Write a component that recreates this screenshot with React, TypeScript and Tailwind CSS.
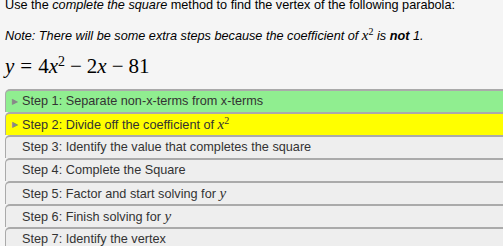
const M = ({ children }: { children: React.ReactNode }) => (
    <span className="font-['Liberation_Serif',serif] italic text-[15px]">{children}</span>
)

const Sup = ({ children }: { children: React.ReactNode }) => (
    <sup className="font-['Liberation_Serif',serif] not-italic text-[10px]">{children}</sup>
)

const steps: { label: React.ReactNode; bg: string; open?: boolean }[] = [
    { label: 'Step 1: Separate non-x-terms from x-terms', bg: 'bg-[#90ee90]', open: true },
    { label: <>Step 2: Divide off the coefficient of <M>x</M><Sup>2</Sup></>, bg: 'bg-[#ffff00]', open: true },
    { label: 'Step 3: Identify the value that completes the square', bg: 'bg-[#eeeeee]' },
    { label: 'Step 4: Complete the Square', bg: 'bg-[#eeeeee]' },
    { label: <>Step 5: Factor and start solving for <M>y</M></>, bg: 'bg-[#eeeeee]' },
    { label: <>Step 6: Finish solving for <M>y</M></>, bg: 'bg-[#eeeeee]' },
    { label: 'Step 7: Identify the vertex', bg: 'bg-[#eeeeee]' },
]

const App = () => {
    return (
        <div className="w-[503px] h-[246px] overflow-hidden bg-[#f5f5f5] font-['Liberation_Sans',Arial,sans-serif] text-black">
            <div className="-mt-[5px] pl-[5px]">
                <p className="h-[20px] text-[12.7px] leading-[20px] whitespace-nowrap">
                    Use the <i>complete the square</i> method to find the vertex of the following parabola:
                </p>
                <p className="mt-[10px] h-[20px] text-[12.7px] leading-[20px] italic whitespace-nowrap">
                    Note: There will be some extra steps because the coefficient of <M>x</M>
                    <Sup>2</Sup> is <b>not</b> 1.
                </p>
                <p className="mt-[8px] h-[26px] leading-[26px] text-[21px] font-['Liberation_Serif',serif] whitespace-nowrap">
                    <i>y</i><span className="mx-[6px]">=</span>4<i>x</i><sup className="text-[14px]">2</sup>
                    <span className="mx-[5px]">−</span>2<i>x</i><span className="mx-[5px]">−</span>81
                </p>
                <div className="mt-[10px] flex flex-col">
                    {steps.map((s, i) => (
                        <div
                            key={i}
                            className={`${s.bg} h-[23px] border-t-2 border-l border-[#aaaaaa] rounded-tl-[5px] flex items-center text-[12.7px] text-[#333333] whitespace-nowrap`}
                        >
                            {s.open ? (
                                <span className="w-[16px] pl-[6px] text-[8px] text-[#888888]">▶</span>
                            ) : (
                                <span className="w-[16px]" />
                            )}
                            <span>{s.label}</span>
                        </div>
                    ))}
                </div>
            </div>
        </div>
    )
}

export default App
